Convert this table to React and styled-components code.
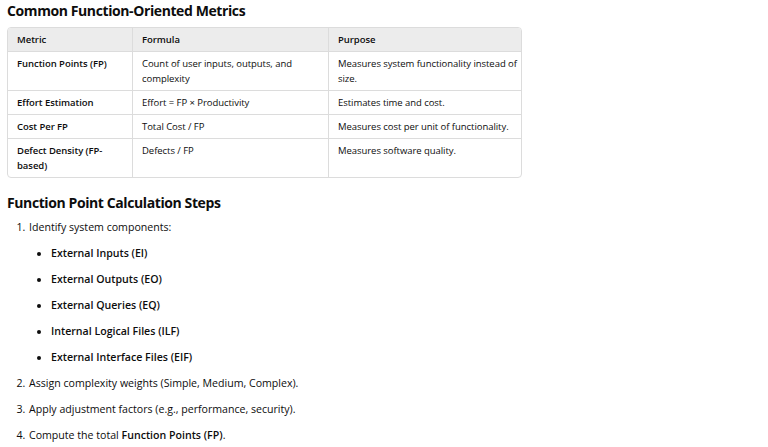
import styled, { createGlobalStyle } from "styled-components";

const GlobalStyle = createGlobalStyle`
  body {
    margin: 0;
    background: #ffffff;
    font-family: "Open Sans", "Noto Sans", sans-serif;
    color: #0d0d0d;
  }
`;

const Page = styled.div`
  padding: 2px 7px 0;
  width: 515px;
`;

const Heading = styled.h3`
  font-size: 14px;
  font-weight: 700;
  letter-spacing: -0.4px;
  margin: 0 0 7px;
  line-height: 18px;
  color: #0d0d0d;
`;

const TableWrap = styled.div`
  border: 1px solid #dcdcdc;
  border-radius: 4px;
  overflow: hidden;
  margin-bottom: 16px;
`;

const Table = styled.table`
  width: 100%;
  border-collapse: collapse;
  font-size: 9.5px;
  line-height: 15px;
  letter-spacing: -0.05px;
  table-layout: fixed;
`;

const Th = styled.th`
  text-align: left;
  font-weight: 600;
  background: #ececec;
  padding: 4px 9px;
  height: 15px;
  border-left: ${(p) => (p.$first ? "none" : "1px solid #dcdcdc")};
  width: ${(p) => p.$w};
`;

const Row = styled.tr`
  border-top: 1px solid #dcdcdc;
`;

const Td = styled.td`
  vertical-align: top;
  padding: 4px 4px 4px 9px;
  font-weight: ${(p) => (p.$bold ? 600 : 400)};
  border-left: ${(p) => (p.$first ? "none" : "1px solid #dcdcdc")};
`;

const Steps = styled.ol`
  margin: 0;
  padding-left: 21px;
  font-size: 10.6px;
  line-height: 16px;
`;

const Step = styled.li`
  margin-top: 10px;
  padding-left: 1px;
  &:first-child {
    margin-top: 0;
  }
`;

const SubList = styled.ul`
  margin: 0;
  padding-left: 22px;
  list-style: disc;
`;

const SubItem = styled.li`
  margin-top: 10px;
  font-weight: 600;
`;

const Strong = styled.span`
  font-weight: 600;
`;

const rows = [
  ["Function Points (FP)", "Count of user inputs, outputs, and complexity", "Measures system functionality instead of size."],
  ["Effort Estimation", "Effort = FP × Productivity", "Estimates time and cost."],
  ["Cost Per FP", "Total Cost / FP", "Measures cost per unit of functionality."],
  ["Defect Density (FP-based)", "Defects / FP", "Measures software quality."],
];

const components = [
  "External Inputs (EI)",
  "External Outputs (EO)",
  "External Queries (EQ)",
  "Internal Logical Files (ILF)",
  "External Interface Files (EIF)",
];

export default function App() {
  return (
    <>
      <GlobalStyle />
      <Page>
        <Heading>Common Function-Oriented Metrics</Heading>
        <TableWrap>
          <Table>
            <thead>
              <tr>
                <Th $first $w="106px">Metric</Th>
                <Th $w="177px">Formula</Th>
                <Th>Purpose</Th>
              </tr>
            </thead>
            <tbody>
              {rows.map((r) => (
                <Row key={r[0]}>
                  <Td $first $bold>{r[0]}</Td>
                  <Td>{r[1]}</Td>
                  <Td>{r[2]}</Td>
                </Row>
              ))}
            </tbody>
          </Table>
        </TableWrap>
        <Heading>Function Point Calculation Steps</Heading>
        <Steps>
          <Step>
            Identify system components:
            <SubList>
              {components.map((c) => (
                <SubItem key={c}>{c}</SubItem>
              ))}
            </SubList>
          </Step>
          <Step>Assign complexity weights (Simple, Medium, Complex).</Step>
          <Step>Apply adjustment factors (e.g., performance, security).</Step>
          <Step>
            Compute the total <Strong>Function Points (FP)</Strong>.
          </Step>
        </Steps>
      </Page>
    </>
  );
}
